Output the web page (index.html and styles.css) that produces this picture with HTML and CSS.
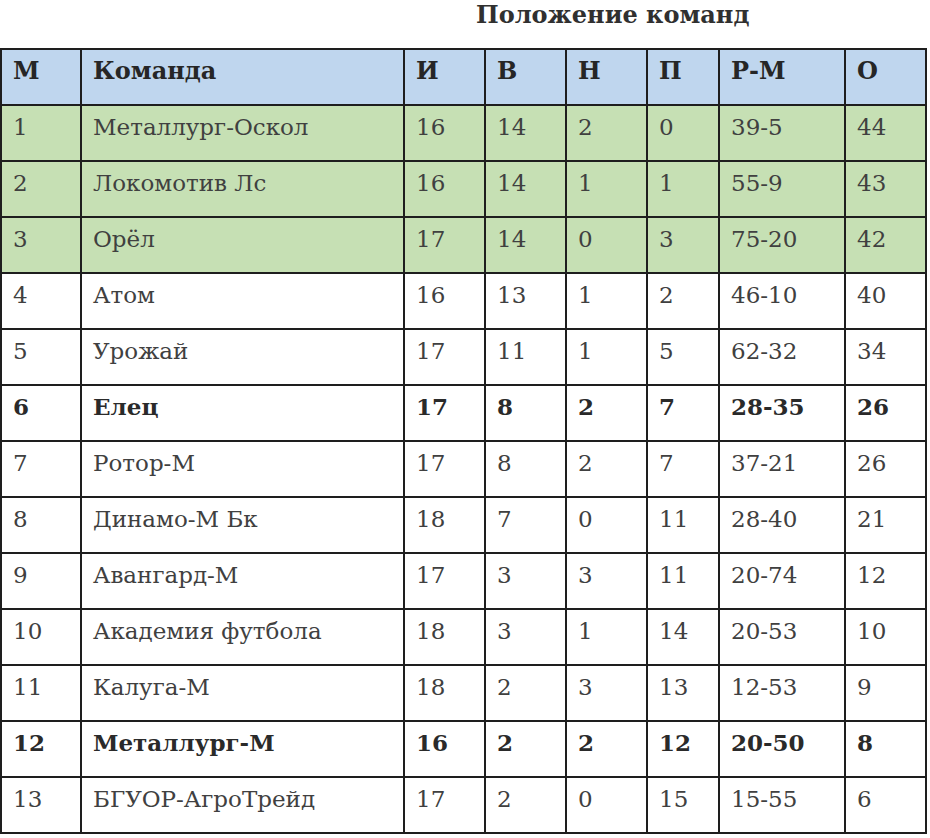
FILE: index.html
```html
<!DOCTYPE html>
<html lang="ru">
<head>
<meta charset="utf-8">
<title>Положение команд</title>
<link rel="stylesheet" href="styles.css">
</head>
<body>
<div class="title">Положение команд</div>
<table class="standings">
<colgroup>
<col class="c-pos"><col class="c-team"><col class="c-num"><col class="c-num"><col class="c-num"><col class="c-narrow"><col class="c-goals"><col class="c-num">
</colgroup>
<thead>
<tr><th>М</th><th>Команда</th><th>И</th><th>В</th><th>Н</th><th>П</th><th>Р-М</th><th>О</th></tr>
</thead>
<tbody>
<tr class="top"><td>1</td><td>Металлург-Оскол</td><td>16</td><td>14</td><td>2</td><td>0</td><td>39-5</td><td>44</td></tr>
<tr class="top"><td>2</td><td>Локомотив Лс</td><td>16</td><td>14</td><td>1</td><td>1</td><td>55-9</td><td>43</td></tr>
<tr class="top"><td>3</td><td>Орёл</td><td>17</td><td>14</td><td>0</td><td>3</td><td>75-20</td><td>42</td></tr>
<tr><td>4</td><td>Атом</td><td>16</td><td>13</td><td>1</td><td>2</td><td>46-10</td><td>40</td></tr>
<tr><td>5</td><td>Урожай</td><td>17</td><td>11</td><td>1</td><td>5</td><td>62-32</td><td>34</td></tr>
<tr class="hl"><td>6</td><td>Елец</td><td>17</td><td>8</td><td>2</td><td>7</td><td>28-35</td><td>26</td></tr>
<tr><td>7</td><td>Ротор-М</td><td>17</td><td>8</td><td>2</td><td>7</td><td>37-21</td><td>26</td></tr>
<tr><td>8</td><td>Динамо-М Бк</td><td>18</td><td>7</td><td>0</td><td>11</td><td>28-40</td><td>21</td></tr>
<tr><td>9</td><td>Авангард-М</td><td>17</td><td>3</td><td>3</td><td>11</td><td>20-74</td><td>12</td></tr>
<tr><td>10</td><td>Академия футбола</td><td>18</td><td>3</td><td>1</td><td>14</td><td>20-53</td><td>10</td></tr>
<tr><td>11</td><td>Калуга-М</td><td>18</td><td>2</td><td>3</td><td>13</td><td>12-53</td><td>9</td></tr>
<tr class="hl"><td>12</td><td>Металлург-М</td><td>16</td><td>2</td><td>2</td><td>12</td><td>20-50</td><td>8</td></tr>
<tr><td>13</td><td>БГУОР-АгроТрейд</td><td>17</td><td>2</td><td>0</td><td>15</td><td>15-55</td><td>6</td></tr>
</tbody>
</table>
</body>
</html>
```
FILE: styles.css
```css
html, body {
  margin: 0;
  padding: 0;
  background: #ffffff;
}
body {
  font-family: "DejaVu Serif", "Liberation Serif", serif;
  color: #404040;
}
.title {
  height: 48px;
  padding-left: 476px;
  box-sizing: border-box;
  padding-top: 0;
  font-size: 24px;
  font-weight: bold;
  color: #303030;
  line-height: 30px;
}
.standings {
  border-collapse: collapse;
  table-layout: fixed;
  width: 927px;
  font-size: 23px;
}
.c-pos { width: 80px; }
.c-team { width: 323px; }
.c-num { width: 81px; }
.c-narrow { width: 72px; }
.c-goals { width: 126px; }
.standings th,
.standings td {
  border: 2px solid #1e1e1e;
  text-align: left;
  vertical-align: top;
  padding: 6px 8px 0 11px;
  line-height: 30px;
  white-space: nowrap;
  overflow: hidden;
}
.standings tr {
  height: 56px;
}
.standings thead th {
  background: #bfd6ee;
  font-weight: bold;
  font-size: 24px;
  color: #262626;
}
.standings tr.top td {
  background: #c6e0b4;
}
.standings tr.hl td {
  font-weight: bold;
  color: #2a2a2a;
}
```
